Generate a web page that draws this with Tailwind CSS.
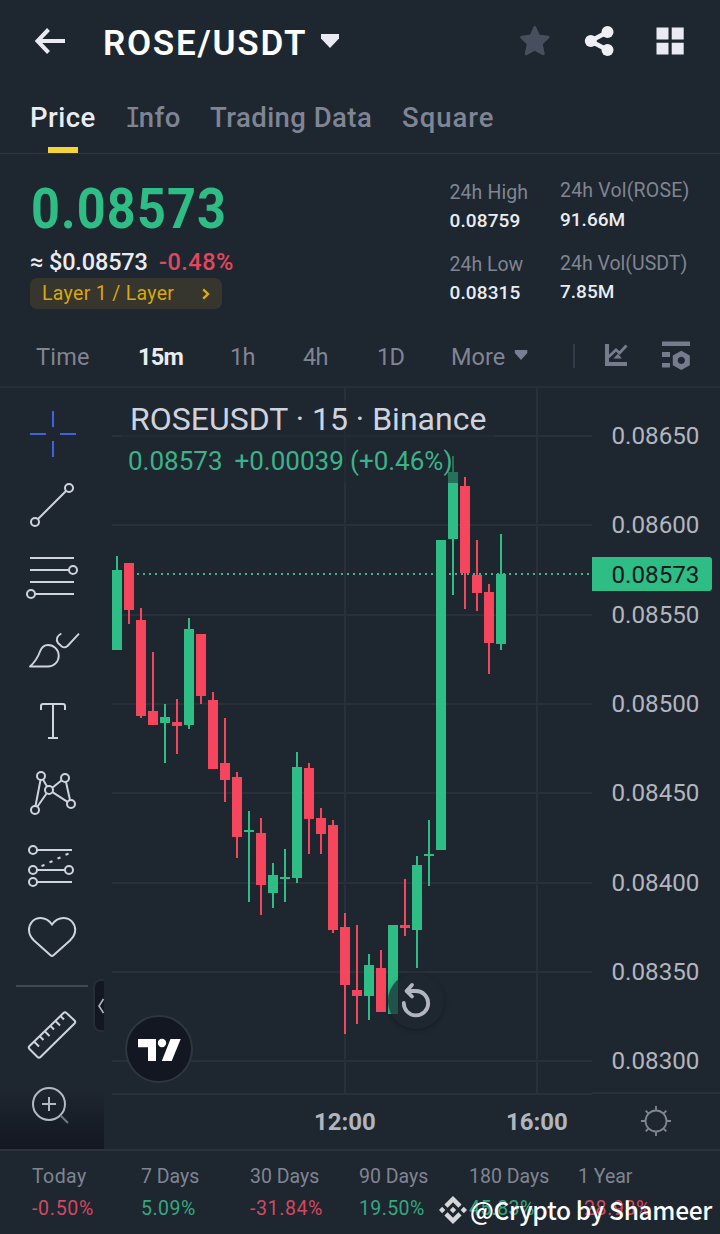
<!DOCTYPE html>
<html lang="en">
<head>
<meta charset="utf-8">
<title>ROSE/USDT</title>
<script src="https://cdn.jsdelivr.net/npm/@tailwindcss/browser@4"></script>
</head>
<body class="bg-[#1e2630]">
<div class="relative flex h-[1234px] w-[720px] flex-col overflow-hidden bg-[#1e2630] font-[Roboto,sans-serif] text-[#808591]">

  <!-- Header -->
  <header class="flex h-[85px] shrink-0 items-start">
    <svg class="ml-[30px] mt-[23px] h-9 w-10" viewBox="30 23 40 36" fill="none" stroke="#eaebf2" stroke-width="4"><path d="M65 41H38M48.500 29.500L37.500 41L48.500 52.500"/></svg>
    <h1 class="ml-[33px] w-[217px] whitespace-nowrap text-[35px] font-semibold leading-[87px] tracking-[1.75px] text-white">ROSE/USDT</h1>
    <svg class="mt-[33px] h-4 w-5" viewBox="320 33 20 16" fill="#eaebf2"><path d="M321 34h18v4.500L330 48L321 38.500z"/></svg>
    <svg class="ml-[177px] mt-[23px] h-9 w-9" viewBox="517 23 36 36" fill="#474f5e" stroke="#474f5e" stroke-width="3" stroke-linejoin="round"><path d="M534.800 27.500L538.600 36L548 37.200L541.200 43.700L543.200 53.800L534.800 49.200L526.300 53.800L528.300 43.700L521.700 37.200L531 36z"/></svg>
    <svg class="ml-[30px] mt-[23px] h-9 w-9" viewBox="583 23 36 36" fill="#eff0f5"><path d="M607.500 32L590.500 41L607.500 50" fill="none" stroke="#eff0f5" stroke-width="4.500"/><circle cx="590.800" cy="41" r="6"/><circle cx="607.500" cy="32" r="6"/><circle cx="607.500" cy="50" r="6"/></svg>
    <svg class="ml-[35px] mt-[23px] h-9 w-9" viewBox="654 23 36 36" fill="#eaebf2"><path d="M656.500 27.500h12v12h-12zM671.700 27.500h12v12h-12zM656.500 42.700h12v11.800h-12zM671.700 42.700h12v11.800h-12z"/></svg>
  </header>

  <!-- Tabs -->
  <nav class="flex h-[69px] shrink-0 border-b border-[#2f3742] pl-[30px] text-[27.5px] font-medium leading-[66px] text-[#7f8593]">
    <div class="relative w-[96px] tracking-[0.47px] text-[#eaecef]">Price<span class="absolute bottom-0 left-[18px] h-[6px] w-[30px] bg-[#f5d33b]"></span></div>
    <div class="w-[84px] tracking-[0.5px]"><span class="-ml-[1px] -mr-[2px] font-['DejaVu_Sans_Mono'] text-[26px] font-normal tracking-normal">I</span>nfo</div>
    <div class="w-[192px] whitespace-nowrap tracking-[0.45px]">Trading Data</div>
    <div class="tracking-[1px]">Square</div>
  </nav>

  <!-- Price summary -->
  <section class="flex h-[172px] shrink-0 pl-[30px]">
    <div class="flex w-[419.500px] flex-col items-start pt-[22px]">
      <div class="h-[65px] origin-left scale-x-90 whitespace-nowrap pl-[1px] text-[56px] font-bold leading-[66px] tracking-[1.3px] text-[#2ebd85]">0.08573</div>
      <div class="mt-[8px] flex h-[27px] whitespace-nowrap text-[23.5px] font-medium leading-[27px]">
        <span class="w-[129px] tracking-[-0.15px] text-[#eaecef]">≈ $0.08573</span>
        <span class="tracking-[0.48px] text-[#e2475f]">-0.48%</span>
      </div>
      <div class="mt-[2px] flex h-[31px] w-[192px] items-center rounded-[7px] bg-[#36352e] pl-[12px] text-[19.5px] leading-[30px] tracking-[0.31px] text-[#d9a70d]">
        <span class="w-[160px]">Layer 1 / Layer</span>
        <svg class="h-3 w-2" viewBox="0 0 8 12" fill="none" stroke="#e0ab0c" stroke-width="2.400"><path d="M1.200 1.300L6 6L1.200 10.700"/></svg>
      </div>
    </div>
    <div class="flex w-[110.500px] flex-col whitespace-nowrap pt-[24.5px] text-[19.5px] leading-[28px]">
      <div class="tracking-[0.1px]">24h High</div>
      <div class="text-[19px] font-medium tracking-[0.12px] text-[#eaecef]">0.08759</div>
      <div class="mt-[16px]">24h Low</div>
      <div class="text-[19px] font-medium tracking-[0.12px] text-[#eaecef]">0.08315</div>
    </div>
    <div class="flex flex-col whitespace-nowrap pt-[22.5px] text-[19.5px] leading-[28px]">
      <div class="tracking-[0.2px]">24h Vol(ROSE)</div>
      <div class="mt-px text-[19px] font-medium text-[#eaecef]">91.66M</div>
      <div class="mt-[16px]">24h Vol(USDT)</div>
      <div class="text-[19px] font-medium text-[#eaecef]">7.85M</div>
    </div>
  </section>

  <!-- Interval bar -->
  <nav class="flex h-[62px] shrink-0 whitespace-nowrap border-b-2 border-[#272e39] pl-[36px] text-[23.5px] leading-[63px]">
    <div class="w-[102px] tracking-[0.2px]">Time</div>
    <div class="w-[92px] font-bold tracking-[-0.7px] text-[#eaecef]">15m</div>
    <div class="w-[73px] tracking-[-0.7px]">1h</div>
    <div class="w-[74px] tracking-[-0.7px]">4h</div>
    <div class="w-[74px] tracking-[-0.7px]">1D</div>
    <div class="w-[63px]">More</div>
    <svg class="mt-[23px] h-3 w-[14px]" viewBox="514 349 14 12" fill="#787f90"><path d="M514.800 350H527.300V353L521 360L514.800 353z"/></svg>
    <div class="ml-[45px] mt-[18px] h-6 w-[2px] bg-[#333a47]"></div>
    <svg class="ml-[28px] mt-[16px] h-6 w-7" viewBox="603 342 28 24" fill="none" stroke="#767c8e"><path d="M607 344V364H627" stroke-width="4"/><path d="M608.500 357L616 349.800L619.500 353L626.500 345.500" stroke-width="2.800"/><path d="M613.500 358.500L617.800 353.800L622 358.500z" fill="#767c8e" stroke="none"/></svg>
    <svg class="ml-[29px] mt-[13px] h-8 w-8" viewBox="660 339 32 32" fill="#767c8e"><path d="M662 341.500h28v4.600h-28zM662 352h8v5h-8zM662 363h8v4.500h-8z"/><path fill-rule="evenodd" d="M681.300 350.800L689.800 355.500V365.300L681.300 370L672.800 365.300V355.500zM681.300 356.800a3.600 3.600 0 1 0 0.010 0z"/></svg>
  </nav>

  <!-- Chart -->
  <main class="flex h-[761px] shrink-0">
    <!-- Drawing tools -->
    <aside class="relative flex w-[104px] flex-col bg-linear-to-b from-transparent from-92% to-[#131722]">
      <svg class="mt-[10px] h-[72px] w-[104px] shrink-0" viewBox="0 398 104 72" stroke="#3e63dd" stroke-width="2"><path d="M53 411V427M53 441V457M30 434H46M60 434H76"/></svg>
      <svg class="h-[72px] w-[104px] shrink-0" viewBox="0 470 104 72" fill="none" stroke="#ced3de" stroke-width="2"><circle cx="69" cy="488" r="4"/><circle cx="35" cy="522" r="4"/><path d="M38 519L66 491"/></svg>
      <svg class="h-[72px] w-[104px] shrink-0" viewBox="0 542 104 72" fill="none" stroke="#ced3de" stroke-width="2"><path d="M30 558H74M30 570H69M30 582H74M35 594H74"/><circle cx="73" cy="570" r="4"/><circle cx="31" cy="594" r="4"/></svg>
      <svg class="h-[72px] w-[104px] shrink-0" viewBox="0 614 104 72" fill="none" stroke="#ced3de" stroke-width="1.900" stroke-linejoin="round"><path d="M30 666.500C35 662 38 657 40 651.500C41.500 647.500 44.500 645 48 645A10.700 10.700 0 0 1 48 666.500z"/><path d="M61.300 633.500C57 636 55.500 639.500 58 643L61.500 646.300Q64.500 648.600 67.500 646L79 633.700"/></svg>
      <svg class="h-[72px] w-[104px] shrink-0" viewBox="0 686 104 72" fill="none" stroke="#ced3de" stroke-width="2"><path d="M41 710V706Q41 704 43 704H63Q65 704 65 706V710M53 704V738M48 738H58"/></svg>
      <svg class="h-[72px] w-[104px] shrink-0" viewBox="0 758 104 72" fill="none" stroke="#ced3de" stroke-width="2"><circle cx="41" cy="776" r="4"/><circle cx="65" cy="778" r="4"/><circle cx="49" cy="790" r="4"/><circle cx="35" cy="810" r="4"/><circle cx="71" cy="804" r="4"/><path d="M43 779.500L47 786.500M52.300 787.700L61.700 780.300M66 782L70 800M52.500 792.200L67.500 801.800M46.700 793.300L37.300 806.700M40.500 780L35.500 806"/></svg>
      <svg class="h-[72px] w-[104px] shrink-0" viewBox="0 830 104 72" fill="none" stroke="#ced3de" stroke-width="2"><circle cx="33" cy="850" r="4"/><circle cx="33" cy="870" r="4"/><circle cx="69" cy="870" r="4"/><circle cx="33" cy="882" r="4"/><path d="M37 850H72M37 870H65M37 882H72"/><path d="M41.500 866L44.500 865M49.500 862.200L52.500 861.200M57.500 858.500L60.500 857.500M65.500 854.800L68.500 853.800"/></svg>
      <svg class="h-[72px] w-[104px] shrink-0" viewBox="0 902 104 72" fill="none" stroke="#ced3de" stroke-width="2"><path d="M52 924.500C48.500 919.500 44 918 40.500 918C33.500 918 29 923.500 29 930C29 934 31 937.500 34 940.500L50.500 955.300Q52 956.800 53.500 955.300L70 940.500C73 937.500 75.200 934 75.200 930C75.200 923.500 70.500 918 63.500 918C60 918 55.500 919.500 52 924.500z"/></svg>
      <div class="ml-4 mt-[11px] h-[2px] w-[72px] shrink-0 bg-[#414753]"></div>
      <svg class="mt-[11px] h-[72px] w-[104px] shrink-0" viewBox="0 998 104 72" fill="none" stroke="#ced3de" stroke-width="2" stroke-linejoin="round"><path d="M63.500 1013Q65 1011.500 66.500 1013L74.500 1020.500Q76 1022 74.500 1023.500L40.500 1057Q39 1058.500 37.500 1057L29.500 1049Q28 1047.500 29.500 1046zM34.500 1042L39 1046.500M40 1036.500L43.500 1040M45 1031.500L49.500 1036M50.500 1026L54 1029.500M55.500 1021L60 1025.500M60.500 1016L64 1019.500"/></svg>
      <svg class="h-[72px] w-[104px] shrink-0" viewBox="0 1070 104 72" fill="none" stroke="#b3b9c4" stroke-width="2"><circle cx="49" cy="1104" r="16"/><path d="M42 1104H56M49 1097V1111"/><path d="M60.500 1115.500L68 1123" stroke="#727884"/></svg>
      <div class="absolute left-[93px] top-[591px] h-[53px] w-[11px] overflow-hidden rounded-l-lg border-2 border-r-0 border-[#272d38] bg-[#131722]">
        <svg class="ml-[2px] mt-[17px] h-4 w-[7px]" viewBox="0 0 7 16" fill="none" stroke="#b2b5be" stroke-width="1.600"><path d="M6.500 1L2 8L6.500 15"/></svg>
      </div>
    </aside>

    <!-- Plot -->
    <div class="relative flex w-[488px] flex-col">
      <svg class="h-[707px] w-[488px] shrink-0" viewBox="104 388 488 707">
        <path d="M345 388V1094M537 388V1094M112 436H592M112 525H592M112 615H592M112 704H592M112 793H592M112 883H592M112 972H592M112 1061H592M112 1094H592" fill="none" stroke="#29303a" stroke-width="2"/>
        <path d="M113 574H592" stroke="#4fae8d" stroke-width="2" stroke-dasharray="2 4"/>
        <g id="candles" shape-rendering="crispEdges"></g>
      </svg>
      <div class="flex h-[54px] text-[24px] font-bold leading-[54px] tracking-[-0.02px] text-[#b2b5be]">
        <span class="ml-[210px] w-[192px]">12:00</span><span>16:00</span>
      </div>

      <!-- Legend -->
      <div class="absolute left-[18px] top-[12px] flex flex-col items-start whitespace-nowrap">
        <div class="h-[38px] bg-[#1e2630]/50 pl-[8px] pr-2 text-[32px] leading-[39px] text-[#ced3de]">ROSEUSDT · 15 · Binance</div>
        <div class="flex h-[45px] w-[337px] bg-[#1e2630]/50 pl-[6px] text-[26px] leading-[46px] text-[#3bb389]">
          <span class="w-[106.500px]">0.08573</span>
          <span class="w-[115.500px]">+0.00039</span>
          <span>(+0.46%)</span>
        </div>
      </div>

      <!-- TradingView mark -->
      <svg class="absolute left-[20px] top-[626px] h-[70px] w-[70px]" viewBox="124 1014 70 70"><circle cx="159" cy="1049" r="33" fill="#131722" stroke="#303641" stroke-width="2"/><path d="M138 1039H156V1061H148V1047.200H138zM170.500 1039H180.700L171.700 1061H161.800z" fill="#fff"/><circle cx="162" cy="1043" r="4.200" fill="#fff"/></svg>

      <!-- Reset button -->
      <div class="absolute left-[284px] top-[585px] flex size-14 items-center justify-center rounded-full bg-[#1e2630]/70 shadow-[0_2px_5px_rgba(0,0,0,0.25)]">
        <svg class="size-14" viewBox="388 973 56 56" fill="none" stroke="#b2b5be" stroke-width="3.800" stroke-linecap="round" stroke-linejoin="round"><path d="M403.800 1003A12.200 12.200 0 1 0 416 991H406.500M412 985L406.500 991L412 996.500"/></svg>
      </div>
    </div>

    <!-- Price axis -->
    <div class="relative flex w-[128px] flex-col text-[24.200px] text-[#b2b5be]">
      <div class="flex h-[706px] flex-col pl-[19.500px] pt-[4px] leading-[89.33px] shadow-[inset_0_-2px_0_#29303a]">
        <span>0.08650</span><span>0.08600</span><span>0.08550</span><span>0.08500</span><span>0.08450</span><span>0.08400</span><span>0.08350</span><span>0.08300</span>
      </div>
      <svg class="ml-[47px] mt-[10px] h-[34px] w-[34px]" viewBox="639 1104 34 34" fill="none" stroke="#80858f" stroke-width="1.800"><circle cx="656" cy="1121" r="10.500"/><path d="M656 1106V1110.500M656 1131.500V1136M641 1121H645.500M666.500 1121H671M645.700 1110.700L648.500 1113.500M663.500 1128.500L666.300 1131.300M666.300 1110.700L663.500 1113.500M648.500 1128.500L645.700 1131.300"/></svg>
      <div class="absolute left-0 top-[169px] h-[34px] w-[120px] rounded-r-[3px] bg-[#2ebd85] pl-[19.500px] leading-[36px] text-[#101820]">0.08573</div>
    </div>
  </main>

  <!-- Performance -->
  <footer class="flex h-[85px] shrink-0 whitespace-nowrap border-t-2 border-[#2b323d] pl-[32px] pt-[10px] text-[19.5px] leading-[32px]">
    <div class="w-[109px]"><div class="tracking-[0.43px]">Today</div><div class="tracking-[0.72px] text-[#d5485f]">-0.50%</div></div>
    <div class="w-[109px]"><div>7 Days</div><div class="tracking-[0.5px] text-[#35a87e]">5.09%</div></div>
    <div class="w-[109px]"><div>30 Days</div><div class="tracking-[0.61px] text-[#d5485f]">-31.84%</div></div>
    <div class="w-[110px]"><div>90 Days</div><div class="tracking-[0.4px] text-[#35a87e]">19.50%</div></div>
    <div class="w-[109px]"><div>180 Days</div><div class="tracking-[0.4px] text-[#35a87e]">45.83%</div></div>
    <div><div>1 Year</div><div class="tracking-[0.61px] text-[#d5485f]">-28.98%</div></div>
  </footer>

  <!-- Watermark -->
  <div class="absolute left-[439px] top-[1190px] flex h-10 items-center whitespace-nowrap">
    <svg class="size-[28px]" viewBox="0 0 24 24" fill="#d6d7d9"><path d="M16.624 13.9202l2.7175 2.7154-7.353 7.353-7.353-7.352 2.7175-2.7164 4.6355 4.6595 4.6356-4.6595zm4.6366-4.6366L24 12l-2.7154 2.7164L18.5682 12l2.6924-2.7164zm-9.272.001l2.7163 2.6914-2.7164 2.7174v-.001L9.2721 12l2.7164-2.7154zm-9.2722-.001L5.4088 12l-2.6914 2.6924L0 12l2.7164-2.7164zM11.9885.0115l7.353 7.329-2.7174 2.7154-4.6356-4.6356-4.6355 4.6595-2.7174-2.7154 7.353-7.353z"/></svg>
    <span class="ml-[3px] font-['Noto_Sans_CJK_SC',sans-serif] text-[24.500px] font-medium leading-10 tracking-[-0.3px] text-white">@Crypto by Shameer</span>
  </div>
</div>

<script>
  // One row per 15-minute candle: high, body top, body bottom, low, rising (1) or falling (0)
  const candles = [
    [556,570,650,650,1],[563,563,610,624,0],[608,620,716,718,0],[652,711,725,725,0],[704,717,723,763,1],
    [699,722,726,754,0],[618,629,725,729,1],[634,634,696,704,0],[692,700,769,769,0],[718,763,780,802,0],
    [772,777,837,858,0],[811,830,832,902,1],[818,833,885,915,0],[863,875,893,908,1],[849,877,879,902,1],
    [752,767,878,883,1],[763,768,819,854,0],[808,818,834,854,0],[820,825,930,933,0],[913,927,985,1034,0],
    [925,990,996,1024,0],[954,965,996,1020,1],[950,968,1012,1012,0],[925,925,1014,1014,1],[879,925,928,936,0],
    [856,865,930,968,1],[820,854,856,886,1],[540,540,850,850,1],[456,472,539,595,1],[477,486,573,609,0],
    [540,575,593,611,0],[584,592,643,674,0],[534,574,644,650,1]
  ];
  document.getElementById('candles').innerHTML = candles.map(([h, t, b, l, up], i) => {
    const x = 117 + 12 * i, c = up ? '#2ebd85' : '#f6465d';
    return `<rect x="${x - 1}" y="${h}" width="2" height="${l - h}" fill="${c}"/><rect x="${x - 5}" y="${t}" width="10" height="${b - t}" fill="${c}"/>`;
  }).join('');
</script>
</body>
</html>
